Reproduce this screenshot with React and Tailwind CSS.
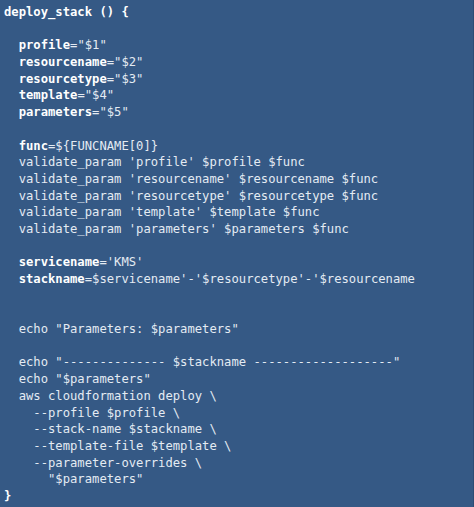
import React from 'react';

// each line: array of [text, bold?]
const lines = [
  [['deploy_stack () {', true]],
  [],
  [['  profile', true], ['="$1"']],
  [['  resourcename', true], ['="$2"']],
  [['  resourcetype', true], ['="$3"']],
  [['  template', true], ['="$4"']],
  [['  parameters', true], ['="$5"']],
  [],
  [['  func', true], ['=${FUNCNAME[0]}']],
  [["  validate_param 'profile' $profile $func"]],
  [["  validate_param 'resourcename' $resourcename $func"]],
  [["  validate_param 'resourcetype' $resourcetype $func"]],
  [["  validate_param 'template' $template $func"]],
  [["  validate_param 'parameters' $parameters $func"]],
  [],
  [['  servicename', true], ["='KMS'"]],
  [['  stackname', true], ["=$servicename'-'$resourcetype'-'$resourcename"]],
  [],
  [],
  [['  echo "Parameters: $parameters"']],
  [],
  [['  echo "-------------- $stackname -------------------"']],
  [['  echo "$parameters"']],
  [['  aws cloudformation deploy \\']],
  [['    --profile $profile \\']],
  [['    --stack-name $stackname \\']],
  [['    --template-file $template \\']],
  [['    --parameter-overrides \\']],
  [['      "$parameters"']],
  [['}', true]],
];

export default function App() {
  return (
    <div className="w-[474px] h-[507px] overflow-hidden bg-[#355985] border-r border-[#2c4c74] pl-[4px] pt-[4px]">
      <pre className="font-['DejaVu_Sans_Mono',monospace] text-[12.2px] leading-[16.7px] text-[#e4ebf3] whitespace-pre m-0">
        {lines.map((parts, i) => (
          <div key={i} className="h-[16.7px]">
            {parts.map(([t, b], j) => (
              <span key={j} className={b ? 'font-bold text-white' : ''}>{t}</span>
            ))}
          </div>
        ))}
      </pre>
    </div>
  );
}
